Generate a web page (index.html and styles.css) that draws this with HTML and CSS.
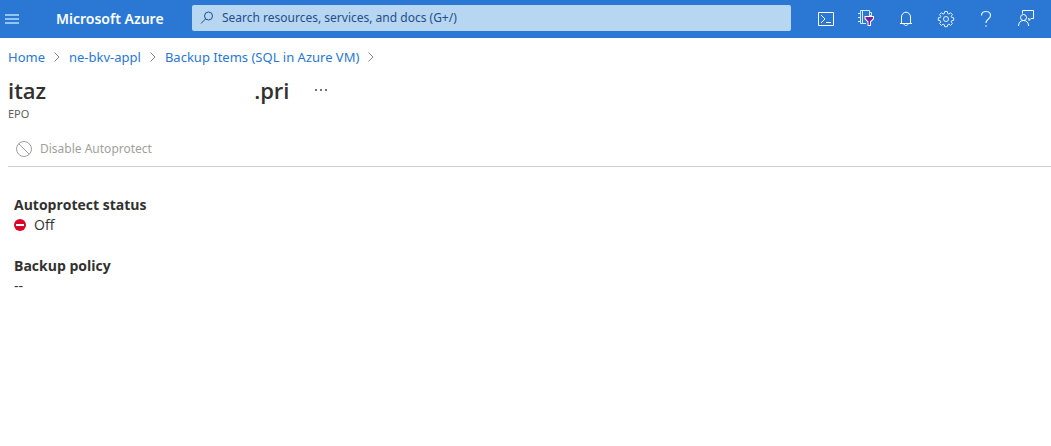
FILE: index.html
```html
<!DOCTYPE html>
<html lang="en">
<head>
<meta charset="utf-8">
<meta name="viewport" content="width=device-width, initial-scale=1">
<title>itaz.pri - Microsoft Azure</title>
<link rel="stylesheet" href="styles.css">
</head>
<body>
<header class="topbar">
  <button class="menu-button" type="button" aria-label="Show portal menu">
    <svg width="14" height="10" viewBox="0 0 14 10" fill="#8ec7f2" shape-rendering="crispEdges"><path d="M0 0h14v2H0zM0 4h14v2H0zM0 8h14v2H0z"/></svg>
  </button>
  <a class="brand" href="#">Microsoft Azure</a>
  <label class="search">
    <svg width="14" height="14" viewBox="0 0 14 14" fill="none" stroke="#1f4e8c"><circle cx="8.5" cy="5" r="4"/><path d="M5.6 7.9 1 12.5"/></svg>
    <input class="search-input" type="text" aria-label="Search" placeholder="Search resources, services, and docs (G+/)">
  </label>
  <nav class="tools" aria-label="Tools">
    <button class="tool" type="button" aria-label="Cloud Shell">
      <svg width="16" height="14" viewBox="0 0 16 14" fill="none" stroke="#fff"><path d="M.5.5h15v13H.5z"/><path d="m3 3 4 4-4 4M8 10.5h5"/></svg>
    </button>
    <button class="tool" type="button" aria-label="Directories and subscriptions">
      <svg width="16" height="18" viewBox="0 0 16 18"><path d="M8 13.5H2.500V.5h9V7M4.500.5v13M11.500 2.500h2v5M11.500 5.500h2M0 3.500h3M0 7.500h3M0 11.500h3" fill="none" stroke="#d5ebff"/><path d="M6.500 6H16v3l-3 3v4H9.500v-4l-3-3z" fill="#fff"/><path d="M7.500 7H15v1.500l-3 3V15h-1.500v-3.500l-3-3z" fill="#7a1fa8"/></svg>
    </button>
    <button class="tool" type="button" aria-label="Notifications">
      <svg width="14" height="16" viewBox="0 0 14 16" fill="none" stroke="#fff"><path d="M1 12.500h12M2.500 12.500V6a4.500 4.800 0 0 1 9 0v6.500M5 13c.3 2 3.700 2 4 0"/></svg>
    </button>
    <button class="tool" type="button" aria-label="Settings">
      <svg width="18" height="18" viewBox="0 0 18 18" fill="none" stroke="#e3f1ff"><path d="M7.700 1.500h2.600l.4 2 1.200.5 1.700-1.200 1.800 1.800L14.200 6.300l.5 1.200 2 .3v2.500l-2 .4-.5 1.200 1.200 1.700-1.800 1.800-1.700-1.200-1.200.5-.4 2H7.700l-.4-2-1.200-.5-1.700 1.200-1.800-1.800 1.200-1.700-.5-1.200-2-.4V7.800l2-.3.5-1.200-1.200-1.700 1.800-1.800L6.100 4l1.200-.5z"/><circle cx="9" cy="9" r="2.500"/></svg>
    </button>
    <button class="tool" type="button" aria-label="Help">
      <svg width="12" height="18" viewBox="0 0 12 18" fill="none" stroke="#e3f1ff" stroke-width="1.200"><path d="M1.500 5.500C1.500 2.800 3.300 1.500 6 1.500s4.500 1.500 4.500 4C10.500 9 6 9 6 13M6 15.200v1.600"/></svg>
    </button>
    <button class="tool" type="button" aria-label="Feedback">
      <svg width="18" height="18" viewBox="0 0 18 18" fill="none" stroke="#fff"><path d="M5.500 3.500v-3h11v8h-2.500l-2 2v-2h-1"/><circle cx="6.500" cy="7.500" r="3"/><path d="M1.500 16c.2-3.500 2-5.500 5-5.500s5 2 5.200 5.500"/></svg>
    </button>
  </nav>
</header>

<main class="blade">
  <nav class="breadcrumb" aria-label="Breadcrumb">
    <a href="#">Home</a>
    <svg class="chevron" width="6" height="10" viewBox="0 0 6 10"><path d="m.5.500 4.500 4.500L.5 9.500"/></svg>
    <a href="#">ne-bkv-appl</a>
    <svg class="chevron" width="6" height="10" viewBox="0 0 6 10"><path d="m.5.500 4.500 4.500L.5 9.500"/></svg>
    <a href="#">Backup Items (SQL in Azure VM)</a>
    <svg class="chevron" width="6" height="10" viewBox="0 0 6 10"><path d="m.5.500 4.500 4.500L.5 9.500"/></svg>
  </nav>

  <div class="title-row">
    <h1 class="title"><span>itaz</span><span>.pri</span></h1>
    <button class="more" type="button" aria-label="More actions">
      <svg width="12" height="2" viewBox="0 0 12 2" fill="#484644"><circle cx="1" cy="1" r="1"/><circle cx="6" cy="1" r="1"/><circle cx="11" cy="1" r="1"/></svg>
    </button>
  </div>
  <p class="subtitle">EPO</p>

  <div class="commands">
    <button class="command" type="button" disabled>
      <svg width="16" height="16" viewBox="0 0 16 16" fill="none" stroke="#a19f9d"><circle cx="8" cy="8" r="7.500"/><path d="m2.700 2.700 10.600 10.600"/></svg>
      Disable Autoprotect
    </button>
  </div>

  <dl class="details">
    <div class="detail">
      <dt>Autoprotect status</dt>
      <dd><svg width="12" height="12" viewBox="0 0 12 12"><circle cx="6" cy="6" r="6" fill="#dc0428"/><path d="M2 5h8v2H2z" fill="#fff"/></svg>Off</dd>
    </div>
    <div class="detail">
      <dt>Backup policy</dt>
      <dd>--</dd>
    </div>
  </dl>
</main>
</body>
</html>
```
FILE: styles.css
```css
* {
  box-sizing: border-box;
}

body {
  margin: 0;
  background: #fff;
  color: #323130;
  font-family: "Segoe UI", "Noto Sans", "Open Sans", sans-serif;
  font-size: 13px;
  line-height: 20px;
}

button {
  padding: 0;
  border: 0;
  background: none;
  color: inherit;
  font: inherit;
}

a {
  color: #2a78d4;
  text-decoration: none;
}

svg {
  display: block;
  flex: none;
}

.topbar {
  display: flex;
  align-items: center;
  height: 38px;
  padding: 0 5px;
  background: #2a78d4;
}

.menu-button {
  width: 51px;
}

.brand {
  width: 136px;
  color: #fff;
  font-size: 14px;
  font-weight: 600;
  white-space: nowrap;
}

.search {
  display: flex;
  flex: 1;
  align-items: center;
  gap: 8px;
  height: 26px;
  margin: 0 15px 2px 0;
  padding: 0 8px;
  border-radius: 2px;
  background: #b7d6f2;
}

.search-input {
  flex: 1;
  min-width: 0;
  padding: 0;
  border: 0;
  outline: 0;
  background: none;
  color: #1f4e8c;
  font: inherit;
  font-size: 12px;
}

.search-input::placeholder {
  color: #1f4e8c;
  opacity: 1;
}

.tools {
  display: flex;
  flex: none;
}

.tool {
  display: grid;
  place-items: center;
  width: 40px;
  height: 36px;
}

.blade {
  padding: 9px 0 0 8px;
}

.breadcrumb {
  display: flex;
  align-items: center;
  gap: 9px;
}

.chevron {
  fill: none;
  stroke: #8a8886;
}

.title-row {
  display: flex;
  align-items: center;
  gap: 26px;
  margin-top: 8px;
}

.title {
  display: flex;
  gap: 208px;
  margin: 0;
  font-family: "Segoe UI", "Open Sans", "Noto Sans", sans-serif;
  font-size: 22px;
  font-weight: 600;
  line-height: 30px;
}

.subtitle {
  margin: 0;
  color: #605e5c;
  font-size: 11px;
  line-height: 18px;
}

.commands {
  display: flex;
  height: 44px;
  padding: 0 8px;
  border-bottom: 1px solid #d2d0ce;
}

.command {
  display: flex;
  align-items: center;
  gap: 8px;
  padding-top: 8px;
  color: #a19f9d;
  font-size: 12px;
}

.details {
  margin: 28px 6px;
  font-family: "Segoe UI", "Open Sans", "Noto Sans", sans-serif;
  font-size: 14px;
}

.detail {
  margin-bottom: 21px;
}

.detail dt {
  font-weight: 700;
}

.detail dd {
  display: flex;
  align-items: center;
  gap: 8px;
  margin: 0;
}
```
